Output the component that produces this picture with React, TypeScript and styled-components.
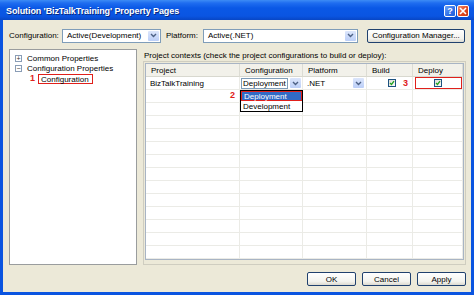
import { FC } from "react";
import styled, { createGlobalStyle } from "styled-components";

const GlobalStyle = createGlobalStyle`
  html, body {
    margin: 0;
    padding: 0;
    background: #ece9d8;
  }
  body {
    font-family: "Liberation Sans", Arial, sans-serif;
    font-size: 8px;
    color: #000;
  }
`;

const COLUMNS = ["Project", "Configuration", "Platform", "Build", "Deploy"];
const EMPTY_ROWS = 13;

const Chevron: FC = () => (
  <svg width="7" height="5" viewBox="0 0 7 5">
    <path d="M1 1 L3.5 3.5 L6 1" stroke="#4d6185" strokeWidth="1.4" fill="none" />
  </svg>
);

const Check: FC = () => (
  <CheckBox>
    <svg width="6" height="6" viewBox="0 0 6 6">
      <path d="M1 3 L2.5 4.5 L5 1.2" stroke="#21a121" strokeWidth="1.3" fill="none" />
    </svg>
  </CheckBox>
);

const App: FC = () => {
  return (
    <>
      <GlobalStyle />
      <Window>
        <TitleBar>
          <Title>Solution 'BizTalkTraining' Property Pages</Title>
          <TitleButtons>
            <CaptionButton>?</CaptionButton>
            <CaptionButton $close>
              <svg width="8" height="8" viewBox="0 0 8 8">
                <path d="M1 1 L7 7 M7 1 L1 7" stroke="#fff" strokeWidth="1.6" />
              </svg>
            </CaptionButton>
          </TitleButtons>
        </TitleBar>

        <Body>
          <TopRow>
            <Label>Configuration:</Label>
            <Combo $width={99}>
              <ComboValue>Active(Development)</ComboValue>
              <ArrowBox>
                <Chevron />
              </ArrowBox>
            </Combo>
            <Label $left={5}>Platform:</Label>
            <Combo $width={155}>
              <ComboValue>Active(.NET)</ComboValue>
              <ArrowBox>
                <Chevron />
              </ArrowBox>
            </Combo>
            <Button $width={98} $left={9}>
              Configuration Manager...
            </Button>
          </TopRow>

          <Main>
            <Tree>
              <TreeItem>
                <Expander>+</Expander>
                Common Properties
              </TreeItem>
              <TreeItem>
                <Expander>−</Expander>
                Configuration Properties
              </TreeItem>
              <TreeItem $indent={20}>
                <Marker>1</Marker>
                <Selected>Configuration</Selected>
              </TreeItem>
            </Tree>

            <RightPane>
              <Caption>
                Project contexts (check the project configurations to build or deploy):
              </Caption>
              <GridFrame>
                <Grid>
                  {COLUMNS.map((c) => (
                    <HeaderCell key={c}>{c}</HeaderCell>
                  ))}

                  <Cell>BizTalkTraining</Cell>
                  <Cell $pad={1}>
                    <CellCombo>Deployment</CellCombo>
                    <CellArrow>
                      <Chevron />
                    </CellArrow>
                  </Cell>
                  <Cell $pad={4}>
                    <Spread>.NET</Spread>
                    <CellArrow $right={2}>
                      <Chevron />
                    </CellArrow>
                  </Cell>
                  <Cell $center>
                    <Check />
                    <Marker $pinned>3</Marker>
                  </Cell>
                  <Cell $center>
                    <Highlight>
                      <Check />
                    </Highlight>
                  </Cell>

                  {Array.from({ length: EMPTY_ROWS * COLUMNS.length }).map((_, i) => (
                    <Cell key={i} />
                  ))}

                  <Marker $floating>2</Marker>
                  <DropList>
                    <DropItem $active>Deployment</DropItem>
                    <DropItem>Development</DropItem>
                  </DropList>
                </Grid>
              </GridFrame>
            </RightPane>
          </Main>

          <Footer>
            <Button $width={49}>OK</Button>
            <Button $width={49}>Cancel</Button>
            <Button $width={49}>Apply</Button>
          </Footer>
        </Body>
      </Window>
    </>
  );
};

const Window = styled.div`
  width: 474px;
  height: 295px;
  display: flex;
  flex-direction: column;
  background: #0a54e0;
  overflow: hidden;
`;

const TitleBar = styled.div`
  height: 20px;
  flex-shrink: 0;
  display: flex;
  align-items: center;
  justify-content: space-between;
  padding: 1px 5px 0 6px;
  box-sizing: border-box;
  background: linear-gradient(
    #3d8cf5 0%,
    #1f6df0 15%,
    #0a58e6 40%,
    #0a55e2 80%,
    #0846c4 100%
  );
`;

const Title = styled.span`
  color: #fff;
  font-weight: bold;
  font-size: 9px;
  letter-spacing: -0.1px;
  text-shadow: 1px 1px 0 #0a2a80;
`;

const TitleButtons = styled.div`
  display: flex;
  gap: 1px;
`;

const CaptionButton = styled.div<{ $close?: boolean }>`
  width: 12px;
  height: 12px;
  box-sizing: border-box;
  border: 1px solid #fff;
  border-radius: 2px;
  display: flex;
  align-items: center;
  justify-content: center;
  color: #fff;
  font-weight: bold;
  font-size: 9px;
  background: ${(p) =>
    p.$close
      ? "linear-gradient(135deg, #f08a6c, #e0451c 60%, #c83a12)"
      : "linear-gradient(135deg, #6ea2f8, #2f6fe8 60%, #245fd8)"};
`;

const Body = styled.div`
  flex: 1;
  margin: 0 3px 3px;
  background: #ece9d8;
  display: flex;
  flex-direction: column;
  padding: 8px 5px 0 6px;
  box-sizing: border-box;
`;

const TopRow = styled.div`
  height: 15px;
  display: flex;
  align-items: center;
`;

const Label = styled.span<{ $left?: number }>`
  margin-left: ${(p) => p.$left ?? 0}px;
  width: ${(p) => (p.$left ? 37 : 53)}px;
`;

const Combo = styled.div<{ $width: number }>`
  width: ${(p) => p.$width}px;
  height: 14px;
  box-sizing: border-box;
  border: 1px solid #7f9db9;
  background: #fff;
  display: flex;
  align-items: center;
  padding: 1px;
`;

const ComboValue = styled.span`
  flex: 1;
  padding-left: 3px;
`;

const ArrowBox = styled.div`
  width: 11px;
  height: 10px;
  border-radius: 1px;
  background: linear-gradient(#dce6fb, #bccff8);
  display: flex;
  align-items: center;
  justify-content: center;
`;

const Button = styled.div<{ $width: number; $left?: number }>`
  width: ${(p) => p.$width}px;
  margin-left: ${(p) => p.$left ?? 0}px;
  height: 14px;
  box-sizing: border-box;
  border: 1px solid #20416e;
  border-radius: 2px;
  background: linear-gradient(#ffffff, #f3f3ee 70%, #dcdad0);
  display: flex;
  align-items: center;
  justify-content: center;
`;

const Main = styled.div`
  height: 216px;
  margin-top: 6px;
  display: flex;
  gap: 6px;
`;

const Tree = styled.div`
  width: 128px;
  box-sizing: border-box;
  border: 1px solid #9a9d9e;
  background: #fff;
  padding-top: 3px;
`;

const TreeItem = styled.div<{ $indent?: number }>`
  height: 10px;
  display: flex;
  align-items: center;
  padding-left: ${(p) => p.$indent ?? 5}px;
`;

const Expander = styled.span`
  width: 7px;
  height: 7px;
  box-sizing: border-box;
  border: 1px solid #8a9db6;
  background: #fff;
  display: flex;
  align-items: center;
  justify-content: center;
  font-size: 7px;
  line-height: 1;
  color: #333;
  margin-right: 5px;
`;

const Marker = styled.span<{ $pinned?: boolean; $floating?: boolean }>`
  color: #e0201b;
  font-weight: bold;
  font-size: 9px;
  width: 8px;
  ${(p) => p.$pinned && "position: absolute; right: 1px; top: 1px;"}
  ${(p) => p.$floating && "position: absolute; left: 84px; top: 26px;"}
`;

const Selected = styled.span`
  height: 10px;
  box-sizing: border-box;
  border: 1.5px solid #e0201b;
  padding: 0 3px 0 2px;
  display: flex;
  align-items: center;
  margin-top: 2px;
`;

const RightPane = styled.div`
  flex: 1;
  display: flex;
  flex-direction: column;
`;

const Caption = styled.div`
  height: 14px;
  display: flex;
  align-items: center;
  padding-left: 1px;
`;

const GridFrame = styled.div`
  flex: 1;
  border: 1px solid #cfcdc0;
  padding: 1px 1px 4px 1px;
`;

const Grid = styled.div`
  position: relative;
  height: 100%;
  box-sizing: border-box;
  border: 1px solid #a8b4c4;
  background: #fff;
  display: grid;
  grid-template-columns: 94px 63px 64px 46px 1fr;
  grid-template-rows: 13px;
  grid-auto-rows: 13px;
  overflow: hidden;
`;

const HeaderCell = styled.div`
  background: #f2f1ea;
  border-right: 1px solid #dcdcd4;
  border-bottom: 1px solid #d8d8cf;
  display: flex;
  align-items: center;
  padding-left: 5px;
`;

const Cell = styled.div<{ $pad?: number; $center?: boolean }>`
  position: relative;
  border-right: 1px solid #ebebe6;
  border-bottom: 1px solid #ebebe6;
  display: flex;
  align-items: center;
  justify-content: ${(p) => (p.$center ? "center" : "flex-start")};
  padding-left: ${(p) => p.$pad ?? 4}px;
`;

const CellCombo = styled.span`
  width: 47px;
  height: 11px;
  box-sizing: border-box;
  border: 1px solid #7f9db9;
  display: flex;
  align-items: center;
  padding-left: 1px;
`;

const CellArrow = styled(ArrowBox)<{ $right?: number }>`
  margin-left: 2px;
  margin-right: ${(p) => p.$right ?? 0}px;
`;

const Spread = styled.span`
  flex: 1;
`;

const CheckBox = styled.span`
  width: 8px;
  height: 8px;
  box-sizing: border-box;
  border: 1px solid #1c5180;
  background: linear-gradient(135deg, #dcdcd7, #fbfbf9);
  display: flex;
  align-items: center;
  justify-content: center;
`;

const Highlight = styled.span`
  width: 47px;
  height: 12px;
  box-sizing: border-box;
  border: 1.5px solid #e0201b;
  display: flex;
  align-items: center;
  justify-content: center;
  margin-left: -3px;
`;

const DropList = styled.div`
  position: absolute;
  left: 94px;
  top: 26px;
  width: 63px;
  box-sizing: border-box;
  border: 1px solid #000;
  background: #fff;
`;

const DropItem = styled.div<{ $active?: boolean }>`
  height: 10px;
  box-sizing: border-box;
  display: flex;
  align-items: center;
  padding-left: 2px;
  background: ${(p) => (p.$active ? "#316ac5" : "#fff")};
  color: ${(p) => (p.$active ? "#fff" : "#000")};
  border: ${(p) => (p.$active ? "1.5px solid #e0201b" : "none")};
`;

const Footer = styled.div`
  height: 14px;
  margin-top: 7px;
  display: flex;
  justify-content: flex-end;
  gap: 6px;
`;

export default App;
